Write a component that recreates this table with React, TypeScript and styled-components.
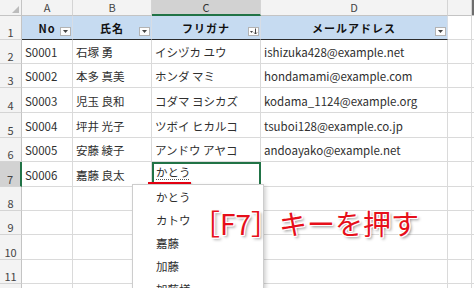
import React from "react";
import styled, { createGlobalStyle, css } from "styled-components";

const GlobalStyle = createGlobalStyle`
  html, body {
    margin: 0;
    padding: 0;
    background: #ffffff;
    overflow: hidden;
  }
  body {
    font-family: "Noto Sans CJK JP", "Noto Sans", sans-serif;
  }
`;

const Sheet = styled.div`
  position: relative;
  width: 474px;
  height: 288px;
  overflow: hidden;
  display: grid;
  grid-template-columns: 22px 51px 79px 109px 187px 24px 2px;
  grid-template-rows: 16px 24px 24px 24px 25px 25px 24px 25px 24px 24px 25px 24px 24px;
`;

const Corner = styled.div`
  position: relative;
  background: #f3f3f3;
  border-right: 1px solid #c4c4c4;
  border-bottom: 1px solid #c4c4c4;
  box-sizing: border-box;

  &::after {
    content: "";
    position: absolute;
    right: 2px;
    bottom: 2px;
    border-style: solid;
    border-width: 0 0 7px 7px;
    border-color: transparent transparent #bcbcbc transparent;
  }
`;

const ColHeader = styled.div<{ $active?: boolean; $dark?: boolean }>`
  box-sizing: border-box;
  background: #f3f3f3;
  border-right: 1px solid #d4d4d4;
  border-bottom: 1px solid #c4c4c4;
  color: #444;
  font-size: 11px;
  line-height: 15px;
  text-align: center;
  ${(p) =>
    p.$active &&
    css`
      background: #d2d2d2;
      border-bottom: 2px solid #217346;
      color: #333;
    `}
  ${(p) =>
    p.$dark &&
    css`
      background: #6e6e6e;
      border-right: none;
    `}
`;

const RowHeader = styled.div<{ $active?: boolean }>`
  box-sizing: border-box;
  background: #f3f3f3;
  border-right: 1px solid #c4c4c4;
  border-bottom: 1px solid #d4d4d4;
  color: #444;
  font-size: 11px;
  line-height: 12px;
  display: flex;
  align-items: flex-end;
  justify-content: center;
  padding-bottom: 1px;
  ${(p) =>
    p.$active &&
    css`
      background: #d2d2d2;
      border-right: 2px solid #217346;
    `}
`;

const HeadCell = styled.div`
  position: relative;
  box-sizing: border-box;
  background: #c6dbf1;
  border-right: 1px solid #d6dde6;
  border-bottom: 1px solid #2b2b2b;
  font-size: 11px;
  font-weight: bold;
  color: #111;
  display: flex;
  align-items: center;
  justify-content: center;
  letter-spacing: 1px;
`;

const FilterButton = styled.span`
  position: absolute;
  right: 1px;
  bottom: 3px;
  width: 11px;
  height: 9px;
  box-sizing: border-box;
  background: #fdfdfd;
  border: 1px solid #b3b3b3;
  display: flex;
  align-items: center;
  justify-content: center;
`;

const Cell = styled.div<{ $editing?: boolean }>`
  box-sizing: border-box;
  border-right: 1px solid #dadada;
  border-bottom: 1px solid #dadada;
  font-size: 11.5px;
  color: #2f2f2f;
  display: flex;
  align-items: center;
  padding: 1px 2px 0 3px;
  white-space: nowrap;
  overflow: hidden;
  ${(p) =>
    p.$editing &&
    css`
      outline: 2px solid #217346;
      outline-offset: -2px;
      align-items: flex-end;
      padding-bottom: 6px;
      padding-left: 4px;
      text-decoration: underline dotted #555;
      text-underline-offset: 2px;
    `}
`;

const BlankCell = styled(Cell)`
  border-right-color: #dadada;
`;

const Underline = styled.div`
  position: absolute;
  left: 148px;
  top: 182px;
  width: 43px;
  height: 3px;
  background: #e60012;
  box-shadow: 1px 1px 2px rgba(0, 0, 0, 0.25);
`;

const Candidates = styled.ul`
  position: absolute;
  left: 132px;
  top: 184px;
  width: 132px;
  height: 120px;
  margin: 0;
  padding: 0;
  list-style: none;
  box-sizing: border-box;
  background: #ffffff;
  border: 1px solid #cdcdcd;
  box-shadow: 2px 2px 4px rgba(0, 0, 0, 0.18);
`;

const Candidate = styled.li`
  height: 23px;
  padding-left: 23px;
  display: flex;
  align-items: center;
  font-size: 11.5px;
  color: #2f2f2f;
`;

const Caption = styled.div`
  position: absolute;
  left: 192px;
  top: 208px;
  font-family: "Noto Sans CJK JP", sans-serif;
  font-size: 28px;
  line-height: 30px;
  color: #e60f1a;
  white-space: nowrap;
  text-shadow: 1px 0 0 #fff, -1px 0 0 #fff, 0 1px 0 #fff, 0 -1px 0 #fff,
    1px 1px 0 #fff, -1px -1px 0 #fff, 1px -1px 0 #fff, -1px 1px 0 #fff,
    2px 2px 3px rgba(0, 0, 0, 0.45);
`;

const DropArrow = () => (
  <svg width="7" height="5" viewBox="0 0 7 5">
    <path d="M1 1h5L3.5 4z" fill="#444" />
  </svg>
);

const SortArrow = () => (
  <svg width="9" height="7" viewBox="0 0 9 7">
    <path d="M1 3h3L2.5 5z" fill="#444" />
    <path d="M6.5 0.5v5.5M5 4.5l1.5 1.5L8 4.5" stroke="#444" strokeWidth="1" fill="none" />
  </svg>
);

const rows = [
  ["S0001", "石塚 勇", "イシヅカ ユウ", "ishizuka428@example.net"],
  ["S0002", "本多 真美", "ホンダ マミ", "hondamami@example.com"],
  ["S0003", "児玉 良和", "コダマ ヨシカズ", "kodama_1124@example.org"],
  ["S0004", "坪井 光子", "ツボイ ヒカルコ", "tsuboi128@example.co.jp"],
  ["S0005", "安藤 綾子", "アンドウ アヤコ", "andoayako@example.net"],
];

const candidates = ["かとう", "カトウ", "嘉藤", "加藤", "加藤様"];

// row 12 sits below the fold, only its top edge shows
const emptyRows = ["8", "9", "10", "11", ""];

const App: React.FC = () => {
  return (
    <>
      <GlobalStyle />
      <Sheet>
        <Corner />
        <ColHeader>A</ColHeader>
        <ColHeader>B</ColHeader>
        <ColHeader $active>C</ColHeader>
        <ColHeader>D</ColHeader>
        <ColHeader />
        <ColHeader $dark />

        <RowHeader>1</RowHeader>
        <HeadCell>
          No
          <FilterButton>
            <DropArrow />
          </FilterButton>
        </HeadCell>
        <HeadCell>
          氏名
          <FilterButton>
            <DropArrow />
          </FilterButton>
        </HeadCell>
        <HeadCell>
          フリガナ
          <FilterButton>
            <SortArrow />
          </FilterButton>
        </HeadCell>
        <HeadCell>
          メールアドレス
          <FilterButton>
            <DropArrow />
          </FilterButton>
        </HeadCell>
        <BlankCell />
        <BlankCell />

        {rows.map((r, i) => (
          <React.Fragment key={r[0]}>
            <RowHeader>{i + 2}</RowHeader>
            {r.map((v, j) => (
              <Cell key={j}>{v}</Cell>
            ))}
            <BlankCell />
            <BlankCell />
          </React.Fragment>
        ))}

        <RowHeader $active>7</RowHeader>
        <Cell>S0006</Cell>
        <Cell>嘉藤 良太</Cell>
        <Cell $editing>かとう</Cell>
        <BlankCell />
        <BlankCell />
        <BlankCell />

        {emptyRows.map((n, i) => (
          <React.Fragment key={i}>
            <RowHeader>{n}</RowHeader>
            <BlankCell />
            <BlankCell />
            <BlankCell />
            <BlankCell />
            <BlankCell />
            <BlankCell />
          </React.Fragment>
        ))}

        <Underline />
        <Candidates>
          {candidates.map((c) => (
            <Candidate key={c}>{c}</Candidate>
          ))}
        </Candidates>
        <Caption>［F7］キーを押す</Caption>
      </Sheet>
    </>
  );
};

export default App;
